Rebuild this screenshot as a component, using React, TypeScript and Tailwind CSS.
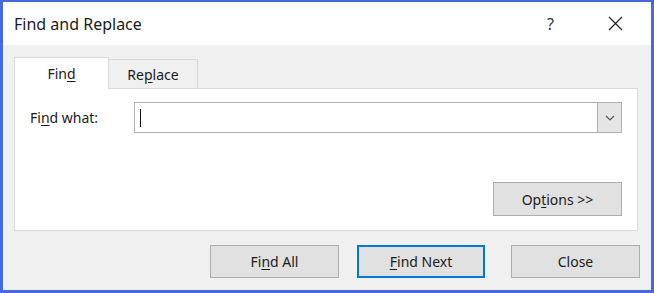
import React from "react";

const font = { fontFamily: '"Noto Sans", "Open Sans", sans-serif' };

function Btn({
  children,
  primary = false,
  className = "",
}: {
  children: React.ReactNode;
  primary?: boolean;
  className?: string;
}) {
  return (
    <button
      className={
        "flex items-center justify-center bg-[#e1e1e1] text-[14px] text-[#1b1b1b] " +
        (primary
          ? "border-2 border-[#0078d7] "
          : "border border-[#adadad] ") +
        className
      }
    >
      {children}
    </button>
  );
}

export default function App() {
  return (
    <div
      className="w-[654px] h-[293px] border-[3px] border-t-[2px] border-[#4668e2] bg-[#f0f0f0] flex flex-col"
      style={font}
    >
      {/* title bar */}
      <div className="h-[43px] bg-white flex items-center pl-[11px] pr-[28px] shrink-0">
        <span className="text-[16px] text-[#1b1b1b]">Find and Replace</span>
        <span className="ml-auto text-[16px] text-[#333] mr-[54px]">?</span>
        <svg width="15" height="15" viewBox="0 0 15 15" className="text-[#222]">
          <path d="M1 1 L14 14 M14 1 L1 14" stroke="currentColor" strokeWidth="1.2" />
        </svg>
      </div>

      {/* body */}
      <div className="flex-1 flex flex-col px-[11px] pt-[12px]">
        <div className="flex items-end h-[31px]">
          <div className="relative z-10 -mb-px w-[95px] h-[32px] bg-white border border-b-0 border-[#d9d9d9] flex items-center justify-center text-[14px] text-[#1b1b1b]">
            Fin<span className="underline underline-offset-2">d</span>
          </div>
          <div className="w-[89px] h-[29px] bg-[#f0f0f0] border-t border-r border-[#d9d9d9] flex items-center justify-center text-[14px] text-[#1b1b1b]">
            Re<span className="underline underline-offset-2">p</span>lace
          </div>
        </div>

        <div className="w-[624px] h-[143px] bg-white border border-[#d9d9d9] flex flex-col px-[15px] pt-[13px]">
          <div className="flex items-center">
            <span className="w-[104px] text-[14px] text-[#1b1b1b]">
              Fi<span className="underline underline-offset-2">n</span>d what:
            </span>
            <div className="w-[490px] h-[31px] border border-[#adadad] flex items-stretch bg-white">
              <div className="flex-1 flex items-center pl-[5px]">
                <div className="w-px h-[18px] bg-[#111]" />
              </div>
              <div className="w-[25px] -m-px bg-[#e5e5e5] border border-[#adadad] flex items-center justify-center">
                <svg width="10" height="6" viewBox="0 0 10 6">
                  <path d="M1 1 L5 5 L9 1" fill="none" stroke="#555" strokeWidth="1.2" />
                </svg>
              </div>
            </div>
          </div>
          <div className="flex justify-end mt-[49px]">
            <Btn className="w-[129px] h-[34px]">
              Op<span className="underline underline-offset-2">t</span>ions &gt;&gt;
            </Btn>
          </div>
        </div>

        <div className="flex justify-end mt-[14px]">
          <Btn className="w-[129px] h-[33px]">
            Fi<span className="underline underline-offset-2">n</span>d All
          </Btn>
          <Btn primary className="w-[128px] h-[33px] ml-[18px]">
            <span className="underline underline-offset-2">F</span>ind Next
          </Btn>
          <Btn className="w-[129px] h-[33px] ml-[26px]">Close</Btn>
        </div>
      </div>
    </div>
  );
}
